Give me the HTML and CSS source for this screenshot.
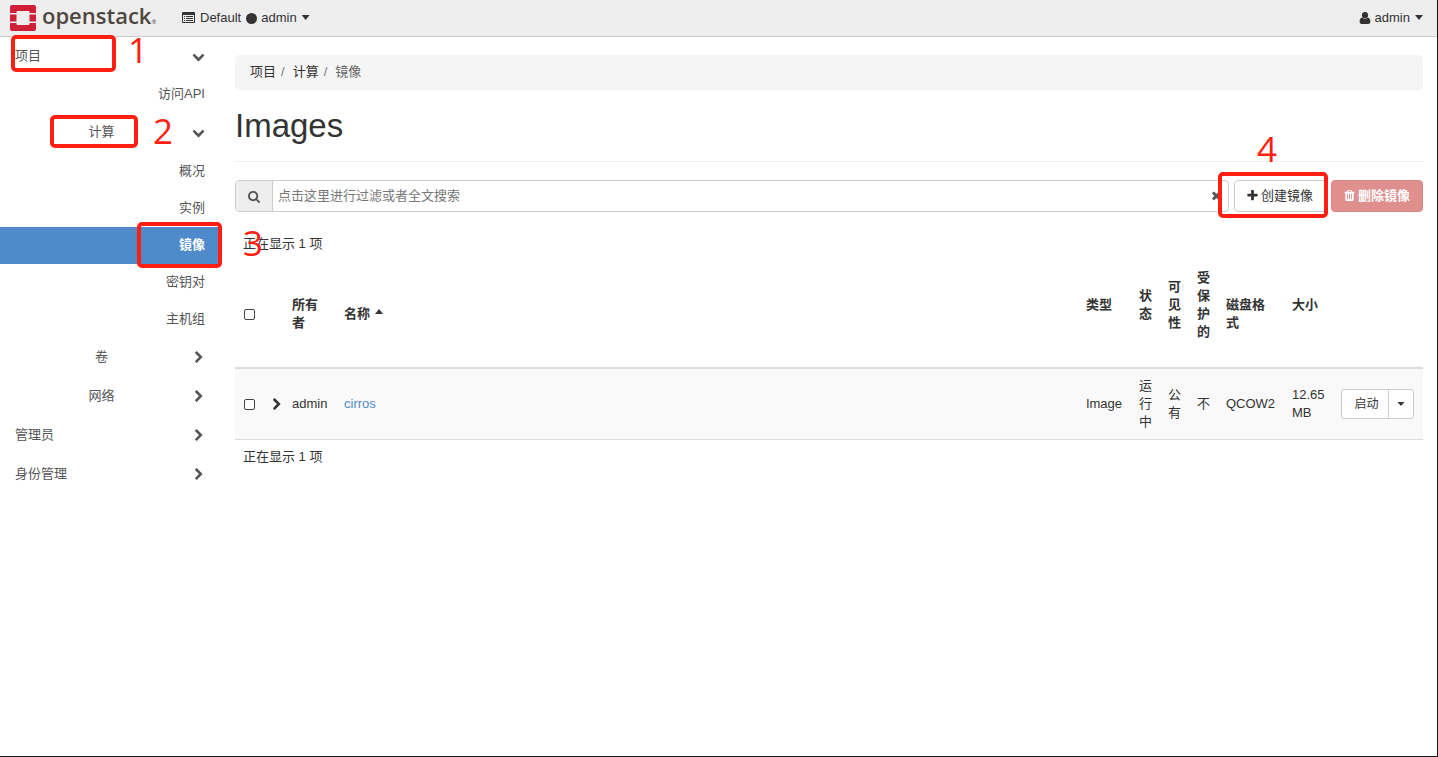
FILE: index.html
```html
<!DOCTYPE html>
<html lang="zh-CN">
<head>
<meta charset="utf-8">
<title>Images - OpenStack Dashboard</title>
<link rel="stylesheet" href="styles.css">
</head>
<body>
<svg class="sprite" aria-hidden="true">
  <symbol id="down" viewBox="0 0 1792 1792"><path d="M1683 808l-742 741q-19 19-45 19t-45-19l-742-741q-19-19-19-45.500t19-45.500l166-165q19-19 45-19t45 19l531 531 531-531q19-19 45-19t45 19l166 165q19 19 19 45.500t-19 45.500z"/></symbol>
  <symbol id="right" viewBox="0 0 1792 1792"><path d="M1427 877l-742 742q-19 19-45 19t-45-19l-166-166q-19-19-19-45t19-45l531-531-531-531q-19-19-19-45t19-45l166-166q19-19 45-19t45 19l742 742q19 19 19 45t-19 45z"/></symbol>
  <symbol id="search" viewBox="0 0 1792 1792"><path d="M1152 832q0-185-131.500-316.500t-316.500-131.500-316.500 131.500-131.500 316.500 131.500 316.500 316.500 131.500 316.500-131.500 131.500-316.500zm512 832q0 52-38 90t-90 38q-54 0-90-38l-343-342q-179 124-399 124-143 0-273.500-55.500t-225-150-150-225-55.500-273.500 55.500-273.500 150-225 225-150 273.500-55.500 273.500 55.500 225 150 150 225 55.500 273.500q0 220-124 399l343 343q37 37 37 90z"/></symbol>
  <symbol id="plus" viewBox="0 0 1792 1792"><path d="M1600 736v192q0 40-28 68t-68 28h-416v416q0 40-28 68t-68 28h-192q-40 0-68-28t-28-68v-416h-416q-40 0-68-28t-28-68v-192q0-40 28-68t68-28h416v-416q0-40 28-68t68-28h192q40 0 68 28t28 68v416h416q40 0 68 28t28 68z"/></symbol>
  <symbol id="times" viewBox="0 0 1792 1792"><path d="M1490 1322q0 40-28 68l-136 136q-28 28-68 28t-68-28l-294-294-294 294q-28 28-68 28t-68-28l-136-136q-28-28-28-68t28-68l294-294-294-294q-28-28-28-68t28-68l136-136q28-28 68-28t68 28l294 294 294-294q28-28 68-28t68 28l136 136q28 28 28 68t-28 68l-294 294 294 294q28 28 28 68z"/></symbol>
  <symbol id="trash" viewBox="0 0 1792 1792"><path d="M704 1376v-704q0-14-9-23t-23-9h-64q-14 0-23 9t-9 23v704q0 14 9 23t23 9h64q14 0 23-9t9-23zm256 0v-704q0-14-9-23t-23-9h-64q-14 0-23 9t-9 23v704q0 14 9 23t23 9h64q14 0 23-9t9-23zm256 0v-704q0-14-9-23t-23-9h-64q-14 0-23 9t-9 23v704q0 14 9 23t23 9h64q14 0 23-9t9-23zm-544-992h448l-48-117q-7-9-17-11h-317q-10 2-17 11zm928 32v64q0 14-9 23t-23 9h-96v948q0 83-47 143.500t-113 60.500h-832q-66 0-113-58.500t-47-141.500v-952h-96q-14 0-23-9t-9-23v-64q0-14 9-23t23-9h309l70-167q15-37 54-63t79-26h320q40 0 79 26t54 63l70 167h309q14 0 23 9t9 23z"/></symbol>
  <symbol id="user" viewBox="0 0 12 12"><circle cx="6" cy="3.200" r="3.100"/><path d="M3.200 5.400Q6 8 8.800 5.400C10.700 5.600 11.400 7.500 11.400 9.600 11.400 11.100 10.600 12 9.400 12H2.600C1.400 12 .6 11.100 .6 9.600 .6 7.500 1.300 5.600 3.200 5.400z"/></symbol>
  <symbol id="list" viewBox="0 0 13 11"><path fill-rule="evenodd" d="M1 0h11a1 1 0 0 1 1 1v9a1 1 0 0 1-1 1H1a1 1 0 0 1-1-1V1a1 1 0 0 1 1-1zm0 3v7h11V3zm1 1h1v1H2zm2 0h7v1H4zM2 6h1v1H2zm2 0h7v1H4zM2 8h1v1H2zm2 0h7v1H4z"/></symbol>
</svg>
<div class="page">
  <header class="topbar">
    <a class="brand" href="#">
      <svg class="brand-mark" viewBox="0 0 26 26" aria-hidden="true">
        <path fill="#cf2037" d="M2 0h22a2 2 0 0 1 2 2v6h-6.500V7a1 1 0 0 0-1-1h-11a1 1 0 0 0-1 1v1H0V2a2 2 0 0 1 2-2zM0 18h6.500v1a1 1 0 0 0 1 1h11a1 1 0 0 0 1-1v-1H26v6a2 2 0 0 1-2 2H2a2 2 0 0 1-2-2z"/>
        <path fill="#cf2037" d="M0 9.500h6.500v7H0zM19.500 9.500H26v7h-6.500z"/>
      </svg>
      <span class="brand-name">openstack<span class="brand-dot">®</span></span>
    </a>
    <button class="menu" type="button"><svg class="list-icon"><use href="#list"/></svg>Default<span class="dot"></span>admin<span class="caret"></span></button>
    <button class="menu user-menu" type="button"><svg class="user-icon"><use href="#user"/></svg>admin<span class="caret"></span></button>
  </header>

  <div class="layout">
    <nav class="sidebar">
      <a class="group" href="#"><span>项目</span><svg class="icon"><use href="#down"/></svg></a>
      <a class="item" href="#">访问API</a>
      <a class="group sub" href="#"><span>计算</span><svg class="icon"><use href="#down"/></svg></a>
      <div class="items">
        <a class="item" href="#">概况</a>
        <a class="item" href="#">实例</a>
        <a class="item active" href="#">镜像</a>
        <a class="item" href="#">密钥对</a>
        <a class="item" href="#">主机组</a>
      </div>
      <a class="group sub" href="#"><span>卷</span><svg class="icon"><use href="#right"/></svg></a>
      <a class="group sub" href="#"><span>网络</span><svg class="icon"><use href="#right"/></svg></a>
      <a class="group" href="#"><span>管理员</span><svg class="icon"><use href="#right"/></svg></a>
      <a class="group" href="#"><span>身份管理</span><svg class="icon"><use href="#right"/></svg></a>
    </nav>

    <main class="main">
      <div class="breadcrumb"><a href="#">项目</a><span>/</span><a href="#">计算</a><span>/</span><span class="current">镜像</span></div>
      <h1 class="title">Images</h1>
      <div class="toolbar">
        <div class="search">
          <label class="addon" for="filter" aria-label="搜索"><svg class="icon"><use href="#search"/></svg></label>
          <input id="filter" class="filter" type="text" placeholder="点击这里进行过滤或者全文搜索">
          <button class="clear" type="button" aria-label="清除"><svg class="icon"><use href="#times"/></svg></button>
        </div>
        <button class="btn create" type="button"><svg class="icon"><use href="#plus"/></svg>创建镜像</button>
        <button class="btn delete" type="button"><svg class="icon"><use href="#trash"/></svg>删除镜像</button>
      </div>

      <table class="images">
        <colgroup>
          <col class="w-narrow"><col class="w-expand"><col class="w-owner"><col><col class="w-type"><col class="w-narrow"><col class="w-narrow"><col class="w-narrow"><col class="w-format"><col class="w-size"><col class="w-action">
        </colgroup>
        <thead>
          <tr><td colspan="11">正在显示 1 项</td></tr>
          <tr class="heads">
            <th><input class="check" type="checkbox" aria-label="全选"></th>
            <th></th>
            <th>所有者</th>
            <th>名称<span class="caret up"></span></th>
            <th>类型<span class="sort"></span></th>
            <th>状态<span class="sort"></span></th>
            <th>可见性<span class="sort"></span></th>
            <th>受保护的<span class="sort"></span></th>
            <th>磁盘格式</th>
            <th>大小<span class="sort"></span></th>
            <th></th>
          </tr>
        </thead>
        <tbody>
          <tr>
            <td><input class="check" type="checkbox" aria-label="选择 cirros"></td>
            <td class="toggle"><button class="expand" type="button" aria-label="展开"><svg class="icon"><use href="#right"/></svg></button></td>
            <td>admin</td>
            <td><a class="link" href="#">cirros</a></td>
            <td>Image</td>
            <td>运行中</td>
            <td>公有</td>
            <td>不</td>
            <td>QCOW2</td>
            <td>12.65 MB</td>
            <td><div class="split"><button class="launch" type="button">启动</button><button class="more" type="button" aria-label="更多"><span class="caret"></span></button></div></td>
          </tr>
        </tbody>
        <tfoot><tr><td colspan="11">正在显示 1 项</td></tr></tfoot>
      </table>
    </main>
  </div>

  <div class="mark mark-1"></div><div class="num num-1">1</div>
  <div class="mark mark-2"></div><div class="num num-2">2</div>
  <div class="mark mark-3"></div><div class="num num-3">3</div>
  <div class="mark mark-4"></div><div class="num num-4">4</div>
</div>
</body>
</html>
```
FILE: styles.css
```css
* { box-sizing: border-box; }
body {
  margin: 0;
  font: 13px/18px "Liberation Sans", "Noto Sans CJK SC", sans-serif;
  color: #333;
  background: #fff;
}
a { color: inherit; text-decoration: none; }
button, input { font: inherit; color: inherit; margin: 0; }
button { cursor: pointer; }
.sprite { position: absolute; width: 0; height: 0; }
.icon { width: 13px; height: 13px; fill: currentColor; flex: none; }

.page {
  position: relative;
  min-height: 100vh;
  border-right: 1px solid #16161a;
  border-bottom: 1px solid #16161a;
}

/* Top bar */
.topbar {
  display: flex;
  align-items: center;
  height: 37px;
  padding: 0 14px 0 10px;
  background: #eee;
  border-bottom: 1px solid #ccc;
}
.brand { display: flex; align-items: center; gap: 6px; width: 172px; }
.brand-mark { width: 26px; height: 26px; }
.brand-name { font: 600 22px/32px "Open Sans", sans-serif; color: #4f4640; }
.brand-dot { font-size: 6px; font-weight: 400; }
.menu { display: flex; align-items: center; padding: 0 0 1px; border: 0; background: none; }
.user-menu { margin-left: auto; }
.list-icon { width: 13px; height: 11px; margin-right: 5px; fill: #333; }
.user-icon { width: 12px; height: 12px; margin-right: 4px; fill: #333; }
.dot { width: 11px; height: 11px; margin: 2px 4px 0 5px; border-radius: 50%; background: #333; }
.caret {
  display: inline-block;
  width: 8px;
  height: 5px;
  margin-left: 5px;
  background: currentColor;
  clip-path: polygon(0 0, 100% 0, 50% 100%);
}
.caret.up { clip-path: polygon(50% 0, 100% 100%, 0 100%); vertical-align: 4px; }

.layout { display: flex; }

/* Sidebar */
.sidebar { flex: 0 0 220px; color: #555; }
.group {
  display: flex;
  align-items: center;
  justify-content: space-between;
  height: 39px;
  padding: 0 15px 1px;
}
.sub { padding-left: 11px; }
.group .icon { margin-top: 1px; }
.sub span { flex: 1; text-align: center; }
.item { display: block; padding: 9px 15px 10px; text-align: right; }
.items { padding-top: 1px; }
.active { color: #fff; background: #4f8bcb; font-weight: bold; }

/* Content */
.main { flex: 1; min-width: 0; padding: 18px 14px 18px 15px; }
.breadcrumb {
  display: flex;
  padding: 8px 15px 9px;
  border-radius: 4px;
  background: #f5f5f5;
}
.breadcrumb span { color: #777; padding: 0 8px 0 5px; }
.breadcrumb .current { padding: 0; color: #666; }
.title {
  margin: 18px 0;
  padding-bottom: 17px;
  border-bottom: 1px solid #eee;
  font-size: 33px;
  line-height: 36px;
  font-weight: 400;
}
.toolbar { display: flex; gap: 4px; margin-bottom: 15px; }
.search { display: flex; flex: 1; height: 32px; border: 1px solid #ccc; border-radius: 4px; margin-right: 1px; }
.addon {
  display: flex;
  align-items: center;
  justify-content: center;
  width: 37px;
  border-right: 1px solid #ccc;
  border-radius: 3px 0 0 3px;
  background: #eee;
  color: #555;
}
.filter { flex: 1; min-width: 0; padding: 0 5px 1px; border: 0; background: none; outline: 0; }
.filter::placeholder { color: #777; opacity: 1; }
.clear { display: flex; align-items: center; padding: 0 5px 1px; border: 0; background: none; color: #555; }
.btn {
  display: flex;
  align-items: center;
  gap: 2px;
  height: 32px;
  padding: 0 12px 1px 11px;
  border: 1px solid #ccc;
  border-radius: 4px;
  background: #fff;
}
.create { padding-right: 13px; }
.delete { color: #fff; background: #df908e; border-color: #da8583; font-weight: bold; }

/* Table */
.images { width: 100%; table-layout: fixed; border-collapse: collapse; }
.images th, .images td { padding: 8px; text-align: left; vertical-align: middle; }
.images th { font-weight: bold; }
.w-narrow { width: 29px; }
.w-expand { width: 20px; }
.w-owner { width: 52px; }
.w-type { width: 53px; }
.w-format { width: 66px; }
.w-size { width: 49px; }
.w-action { width: 90px; }
.heads { border-bottom: 2px solid #ddd; }
.images tbody tr { background: #f9f9f9; border-bottom: 1px solid #ddd; }
.sort { display: block; height: 18px; }
.check {
  display: block;
  appearance: none;
  width: 11px;
  height: 11px;
  margin: 0 0 0 1px;
  border: 1px solid #444;
  border-radius: 2px;
  background: #fff;
}
.images .toggle { padding: 8px 6px; }
.expand { display: block; padding: 0; border: 0; background: none; }
.expand .icon { display: block; }
.link { color: #4f8bcb; }
.split { display: flex; width: 73px; height: 30px; border: 1px solid #ccc; border-radius: 3px; background: #fff; }
.launch, .more { border: 0; padding: 0; background: none; font-size: 12px; }
.launch { flex: 1; padding-left: 3px; }
.more { display: flex; align-items: center; justify-content: center; width: 25px; border-left: 1px solid #ccc; }
.more .caret { margin: 0; width: 7px; height: 4px; }

/* Numbered step callouts */
.mark, .num { position: absolute; pointer-events: none; }
.mark { border: 4px solid #ff1f12; border-radius: 5px; }
.num { font: 35px/36px "Open Sans", sans-serif; color: #ff1f12; }
.mark-1 { left: 11px; top: 35px; width: 105px; height: 37px; }
.mark-2 { left: 50px; top: 115px; width: 88px; height: 33px; }
.mark-3 { left: 137px; top: 222px; width: 85px; height: 46px; }
.mark-4 { right: 109px; top: 172px; width: 110px; height: 46px; }
.num-1 { left: 128px; top: 32px; }
.num-2 { left: 153px; top: 113px; }
.num-3 { left: 243px; top: 225px; }
.num-4 { right: 160px; top: 131px; }
```
